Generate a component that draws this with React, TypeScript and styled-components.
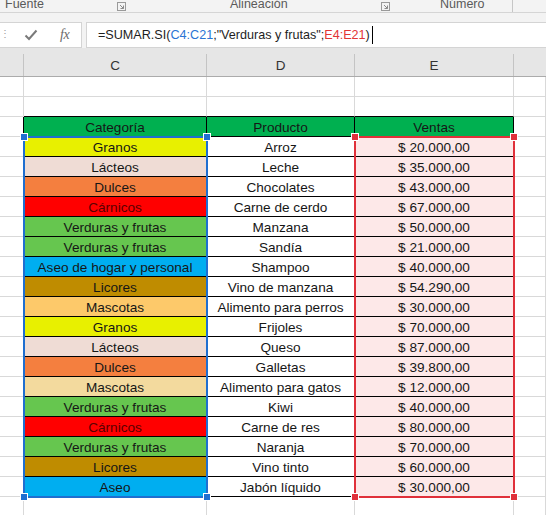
import React from "react";
import styled, { createGlobalStyle } from "styled-components";

const GlobalStyle = createGlobalStyle`
  html, body { margin: 0; padding: 0; background: #ffffff; }
  body { font-family: "Liberation Sans", Arial, sans-serif; overflow: hidden; }
  * { box-sizing: border-box; }
`;

const Page = styled.div`
  width: 546px;
  height: 515px;
  overflow: hidden;
  display: flex;
  flex-direction: column;
  background: #ffffff;
`;

const Top = styled.div`
  background: #f3f3f3;
  display: flex;
  flex-direction: column;
`;

const Ribbon = styled.div`
  height: 13px;
  display: flex;
  border-bottom: 1px solid #d5d5d5;
  overflow: hidden;
`;

const RibbonGroup = styled.div<{ $w: number; $pad: number }>`
  width: ${(p) => p.$w}px;
  flex: none;
  display: flex;
  align-items: flex-end;
  padding-left: ${(p) => p.$pad}px;
  padding-right: 6px;
  position: relative;
`;

const GroupLabel = styled.span`
  font-size: 12.5px;
  line-height: 13px;
  color: #5a5a5a;
  margin-bottom: 1px;
`;

const Launcher = styled.svg`
  margin-left: auto;
  margin-bottom: 1px;
  flex: none;
`;

const GroupSep = styled.div`
  width: 1px;
  height: 13px;
  background: #c6c6c6;
  flex: none;
`;

const Band = styled.div`
  height: 9px;
`;

const FormulaRow = styled.div`
  height: 26px;
  display: flex;
  gap: 4px;
`;

const LeftBox = styled.div`
  width: 82px;
  flex: none;
  background: #ffffff;
  border-top: 1px solid #d4d4d4;
  border-bottom: 1px solid #d4d4d4;
  border-right: 1px solid #d4d4d4;
  display: flex;
  align-items: center;
  position: relative;
`;

const Dots = styled.span`
  position: absolute;
  left: 0px;
  top: 6px;
  font-size: 10px;
  color: #9a9a9a;
  line-height: 10px;
`;

const IconSlot = styled.div<{ $x: number }>`
  position: absolute;
  left: ${(p) => p.$x}px;
  top: 0;
  height: 100%;
  display: flex;
  align-items: center;
`;

const Fx = styled.span`
  font-family: "Liberation Serif", "Times New Roman", serif;
  font-style: italic;
  font-size: 14px;
  color: #6b6b6b;
  letter-spacing: -0.5px;
`;

const FormulaBox = styled.div`
  flex: 1;
  background: #ffffff;
  border: 1px solid #d4d4d4;
  border-right: none;
  display: flex;
  align-items: center;
  padding-left: 11px;
  font-size: 12.6px;
  color: #1e1e1e;
  white-space: nowrap;
`;

const Ref = styled.span<{ $c: string }>`
  color: ${(p) => p.$c};
`;

const Caret = styled.span`
  display: inline-block;
  width: 1px;
  height: 18px;
  background: #000;
  margin-left: 2px;
`;

const Sheet = styled.div`
  position: relative;
  flex: 1;
  display: flex;
  flex-direction: column;
`;

const COLS = "24px 183px 148px 159px 1fr";

const HeaderRow = styled.div`
  display: grid;
  grid-template-columns: ${COLS};
  height: 29px;
  background: #e6e6e6;
  border-bottom: 1px solid #ababab;
`;

const ColHead = styled.div<{ $last?: boolean }>`
  display: flex;
  align-items: flex-end;
  justify-content: center;
  padding-bottom: 3px;
  font-size: 13.5px;
  color: #333333;
  border-right: ${(p) => (p.$last ? "none" : "1px solid #c4c4c4")};
  margin-top: 6px;
`;

const Row = styled.div`
  display: grid;
  grid-template-columns: ${COLS};
  height: 20px;
`;

const Cell = styled.div<{ $bottomDark?: boolean; $rightDark?: boolean }>`
  border-right: 1px solid ${(p) => (p.$rightDark ? "#000" : "#d9d9d9")};
  border-bottom: 1px solid ${(p) => (p.$bottomDark ? "#000" : "#d9d9d9")};
`;

const TCell = styled.div<{ $fill: string; $color?: string }>`
  background: ${(p) => p.$fill};
  color: ${(p) => p.$color || "#161616"};
  border-right: 1px solid #000;
  border-bottom: 1px solid #000;
  display: flex;
  align-items: center;
  justify-content: center;
  font-size: 13.6px;
  line-height: 19px;
  padding-top: 1px;
  white-space: nowrap;
  overflow: hidden;
`;

const Selection = styled.div<{ $c: string; $l: number; $w: number }>`
  position: absolute;
  left: ${(p) => p.$l}px;
  top: 88px;
  width: ${(p) => p.$w}px;
  height: 362px;
  border: 2px solid ${(p) => p.$c};
  pointer-events: none;
`;

const Handle = styled.div<{ $c: string; $pos: string }>`
  position: absolute;
  width: 8px;
  height: 8px;
  background: ${(p) => p.$c};
  border: 1px solid #ffffff;
  ${(p) => p.$pos}
`;

type R = [string, string, string, string, string?];

const rows: R[] = [
  ["Granos", "#e8f000", "Arroz", "$ 20.000,00"],
  ["Lácteos", "#efdcd5", "Leche", "$ 35.000,00"],
  ["Dulces", "#f47f3f", "Chocolates", "$ 43.000,00"],
  ["Cárnicos", "#ff0000", "Carne de cerdo", "$ 67.000,00", "#5a0000"],
  ["Verduras y frutas", "#66c64f", "Manzana", "$ 50.000,00"],
  ["Verduras y frutas", "#66c64f", "Sandía", "$ 21.000,00"],
  ["Aseo de hogar y personal", "#00aef0", "Shampoo", "$ 40.000,00"],
  ["Licores", "#bf8c00", "Vino de manzana", "$ 54.290,00"],
  ["Mascotas", "#fdc96a", "Alimento para perros", "$ 30.000,00"],
  ["Granos", "#e8f000", "Frijoles", "$ 70.000,00"],
  ["Lácteos", "#efdcd5", "Queso", "$ 87.000,00"],
  ["Dulces", "#f47f3f", "Galletas", "$ 39.800,00"],
  ["Mascotas", "#f3da9e", "Alimento para gatos", "$ 12.000,00"],
  ["Verduras y frutas", "#66c64f", "Kiwi", "$ 40.000,00"],
  ["Cárnicos", "#ff0000", "Carne de res", "$ 80.000,00", "#5a0000"],
  ["Verduras y frutas", "#66c64f", "Naranja", "$ 70.000,00"],
  ["Licores", "#bf8c00", "Vino tinto", "$ 60.000,00"],
  ["Aseo", "#00aef0", "Jabón líquido", "$ 30.000,00"],
];

const BLUE = "#1f6fd0";
const RED = "#e0303a";
const PINK = "#fde8e8";

const LauncherIcon = () => (
  <Launcher width="9" height="9" viewBox="0 0 9 9">
    <rect x="0.5" y="0.5" width="8" height="8" fill="none" stroke="#9a9a9a" />
    <path d="M3 3 L6.5 6.5 M6.5 3.5 V6.5 H3.5" stroke="#8a8a8a" fill="none" />
  </Launcher>
);

const EmptyRow = ({ darkBottom }: { darkBottom?: boolean }) => (
  <Row>
    <Cell />
    <Cell $bottomDark={darkBottom} />
    <Cell $bottomDark={darkBottom} />
    <Cell $bottomDark={darkBottom} />
    <Cell />
  </Row>
);

const corners = (c: string) => (
  <>
    <Handle $c={c} $pos="left: -5px; top: -5px;" />
    <Handle $c={c} $pos="right: -5px; top: -5px;" />
    <Handle $c={c} $pos="left: -5px; bottom: -5px;" />
    <Handle $c={c} $pos="right: -5px; bottom: -5px;" />
  </>
);

export default function App() {
  return (
    <>
      <GlobalStyle />
      <Page>
        <Top>
          <Ribbon>
            <RibbonGroup $w={132} $pad={5}>
              <GroupLabel>Fuente</GroupLabel>
              <LauncherIcon />
            </RibbonGroup>
            <RibbonGroup $w={264} $pad={98}>
              <GroupLabel>Alineación</GroupLabel>
              <LauncherIcon />
            </RibbonGroup>
            <RibbonGroup $w={116} $pad={44}>
              <GroupLabel>Número</GroupLabel>
            </RibbonGroup>
            <GroupSep />
          </Ribbon>
          <Band />
          <FormulaRow>
            <LeftBox>
              <Dots>⋮</Dots>
              <IconSlot $x={24}>
                <svg width="14" height="12" viewBox="0 0 14 12">
                  <path d="M1.5 6.5 L5 10 L12.5 1.5" stroke="#7a7a7a" strokeWidth="2" fill="none" />
                </svg>
              </IconSlot>
              <IconSlot $x={60}>
                <Fx>fx</Fx>
              </IconSlot>
            </LeftBox>
            <FormulaBox>
              =SUMAR.SI(<Ref $c="#2a74d4">C4:C21</Ref>;"Verduras y frutas";
              <Ref $c="#e23535">E4:E21</Ref>)<Caret />
            </FormulaBox>
          </FormulaRow>
        </Top>
        <Sheet>
          <HeaderRow>
            <ColHead />
            <ColHead>C</ColHead>
            <ColHead>D</ColHead>
            <ColHead>E</ColHead>
            <ColHead $last />
          </HeaderRow>
          <EmptyRow />
          <EmptyRow darkBottom />
          <Row>
            <Cell $rightDark />
            <TCell $fill="#00b050">Categoría</TCell>
            <TCell $fill="#00b050">Producto</TCell>
            <TCell $fill="#00b050">Ventas</TCell>
            <Cell />
          </Row>
          {rows.map(([cat, fill, prod, sale, tc], i) => (
            <Row key={i}>
              <Cell $rightDark />
              <TCell $fill={fill} $color={tc}>{cat}</TCell>
              <TCell $fill="#ffffff">{prod}</TCell>
              <TCell $fill={PINK}>{sale}</TCell>
              <Cell />
            </Row>
          ))}
          <EmptyRow />
          <Selection $c={BLUE} $l={23} $w={185}>{corners(BLUE)}</Selection>
          <Selection $c={RED} $l={354} $w={161}>{corners(RED)}</Selection>
        </Sheet>
      </Page>
    </>
  );
}
